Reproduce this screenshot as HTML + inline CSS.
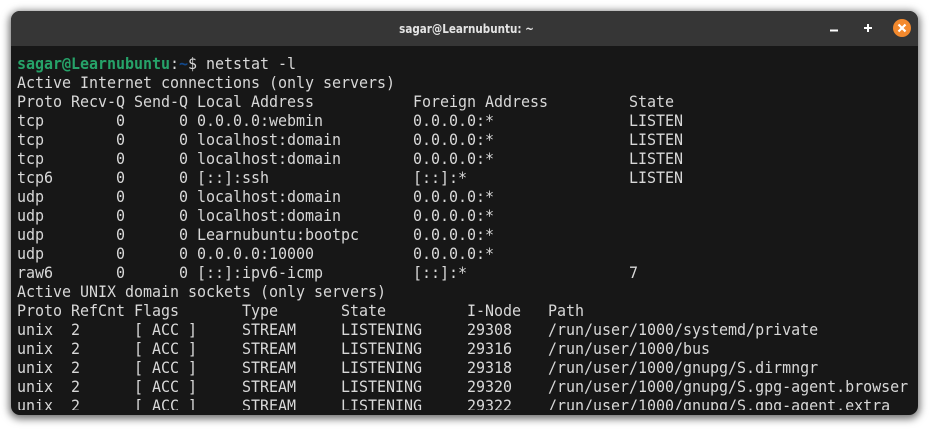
<!DOCTYPE html>
<html><head><meta charset="utf-8"><style>
html,body{margin:0;padding:0;background:#fff;width:936px;height:429px;overflow:hidden}
#win{position:absolute;left:11px;top:11px;width:907px;height:404px;border-radius:9px;background:#171717;overflow:hidden;box-shadow:0 2px 8px 2px rgba(0,0,0,.55)}
#bar{position:absolute;left:0;top:0;width:907px;height:35px;background:#363636}
#title{position:absolute;left:2px;top:0;width:907px;height:35px;text-align:center;color:#e4e4e4;font:bold 12.5px/35px "DejaVu Sans",sans-serif;transform:scaleX(.83)}
#clip{position:absolute;left:0;top:35px;width:907px;height:364px;overflow:hidden}
pre{position:absolute;left:6px;top:8px;margin:0;font:16px/19px "DejaVu Sans Mono","Liberation Mono",monospace;color:#d8d8d8;letter-spacing:-.032px;transform:scaleX(.9375);transform-origin:0 0}
.g{color:#26a269;font-weight:bold}.b{color:#12488b;font-weight:bold}
#close{position:absolute;left:882px;top:8px;width:18px;height:18px;border-radius:50%;background:#f3892d}
</style></head><body>
<div id="win">
<div id="bar"></div>
<div id="title">sagar@Learnubuntu: ~</div>
<svg style="position:absolute;left:810px;top:0" width="60" height="35">
<path d="M9 19.5H17M43 17H51M47 13V21" stroke="#fff" stroke-width="2" fill="none"/>
</svg>
<div id="close"></div>
<svg style="position:absolute;left:882px;top:8px" width="18" height="18"><path d="M5.5 5.5L12.5 12.5M12.5 5.5L5.5 12.5" stroke="#fff" stroke-width="2.2"/></svg>
<div id="clip"><pre><span class="g">sagar@Learnubuntu</span>:<span class="b">~</span>$ netstat -l
Active Internet connections (only servers)
Proto Recv-Q Send-Q Local Address           Foreign Address         State
tcp        0      0 0.0.0.0:webmin          0.0.0.0:*               LISTEN
tcp        0      0 localhost:domain        0.0.0.0:*               LISTEN
tcp        0      0 localhost:domain        0.0.0.0:*               LISTEN
tcp6       0      0 [::]:ssh                [::]:*                  LISTEN
udp        0      0 localhost:domain        0.0.0.0:*
udp        0      0 localhost:domain        0.0.0.0:*
udp        0      0 Learnubuntu:bootpc      0.0.0.0:*
udp        0      0 0.0.0.0:10000           0.0.0.0:*
raw6       0      0 [::]:ipv6-icmp          [::]:*                  7
Active UNIX domain sockets (only servers)
Proto RefCnt Flags       Type       State         I-Node   Path
unix  2      [ ACC ]     STREAM     LISTENING     29308    /run/user/1000/systemd/private
unix  2      [ ACC ]     STREAM     LISTENING     29316    /run/user/1000/bus
unix  2      [ ACC ]     STREAM     LISTENING     29318    /run/user/1000/gnupg/S.dirmngr
unix  2      [ ACC ]     STREAM     LISTENING     29320    /run/user/1000/gnupg/S.gpg-agent.browser
unix  2      [ ACC ]     STREAM     LISTENING     29322    /run/user/1000/gnupg/S.gpg-agent.extra</pre></div>
</div>
</body></html>
